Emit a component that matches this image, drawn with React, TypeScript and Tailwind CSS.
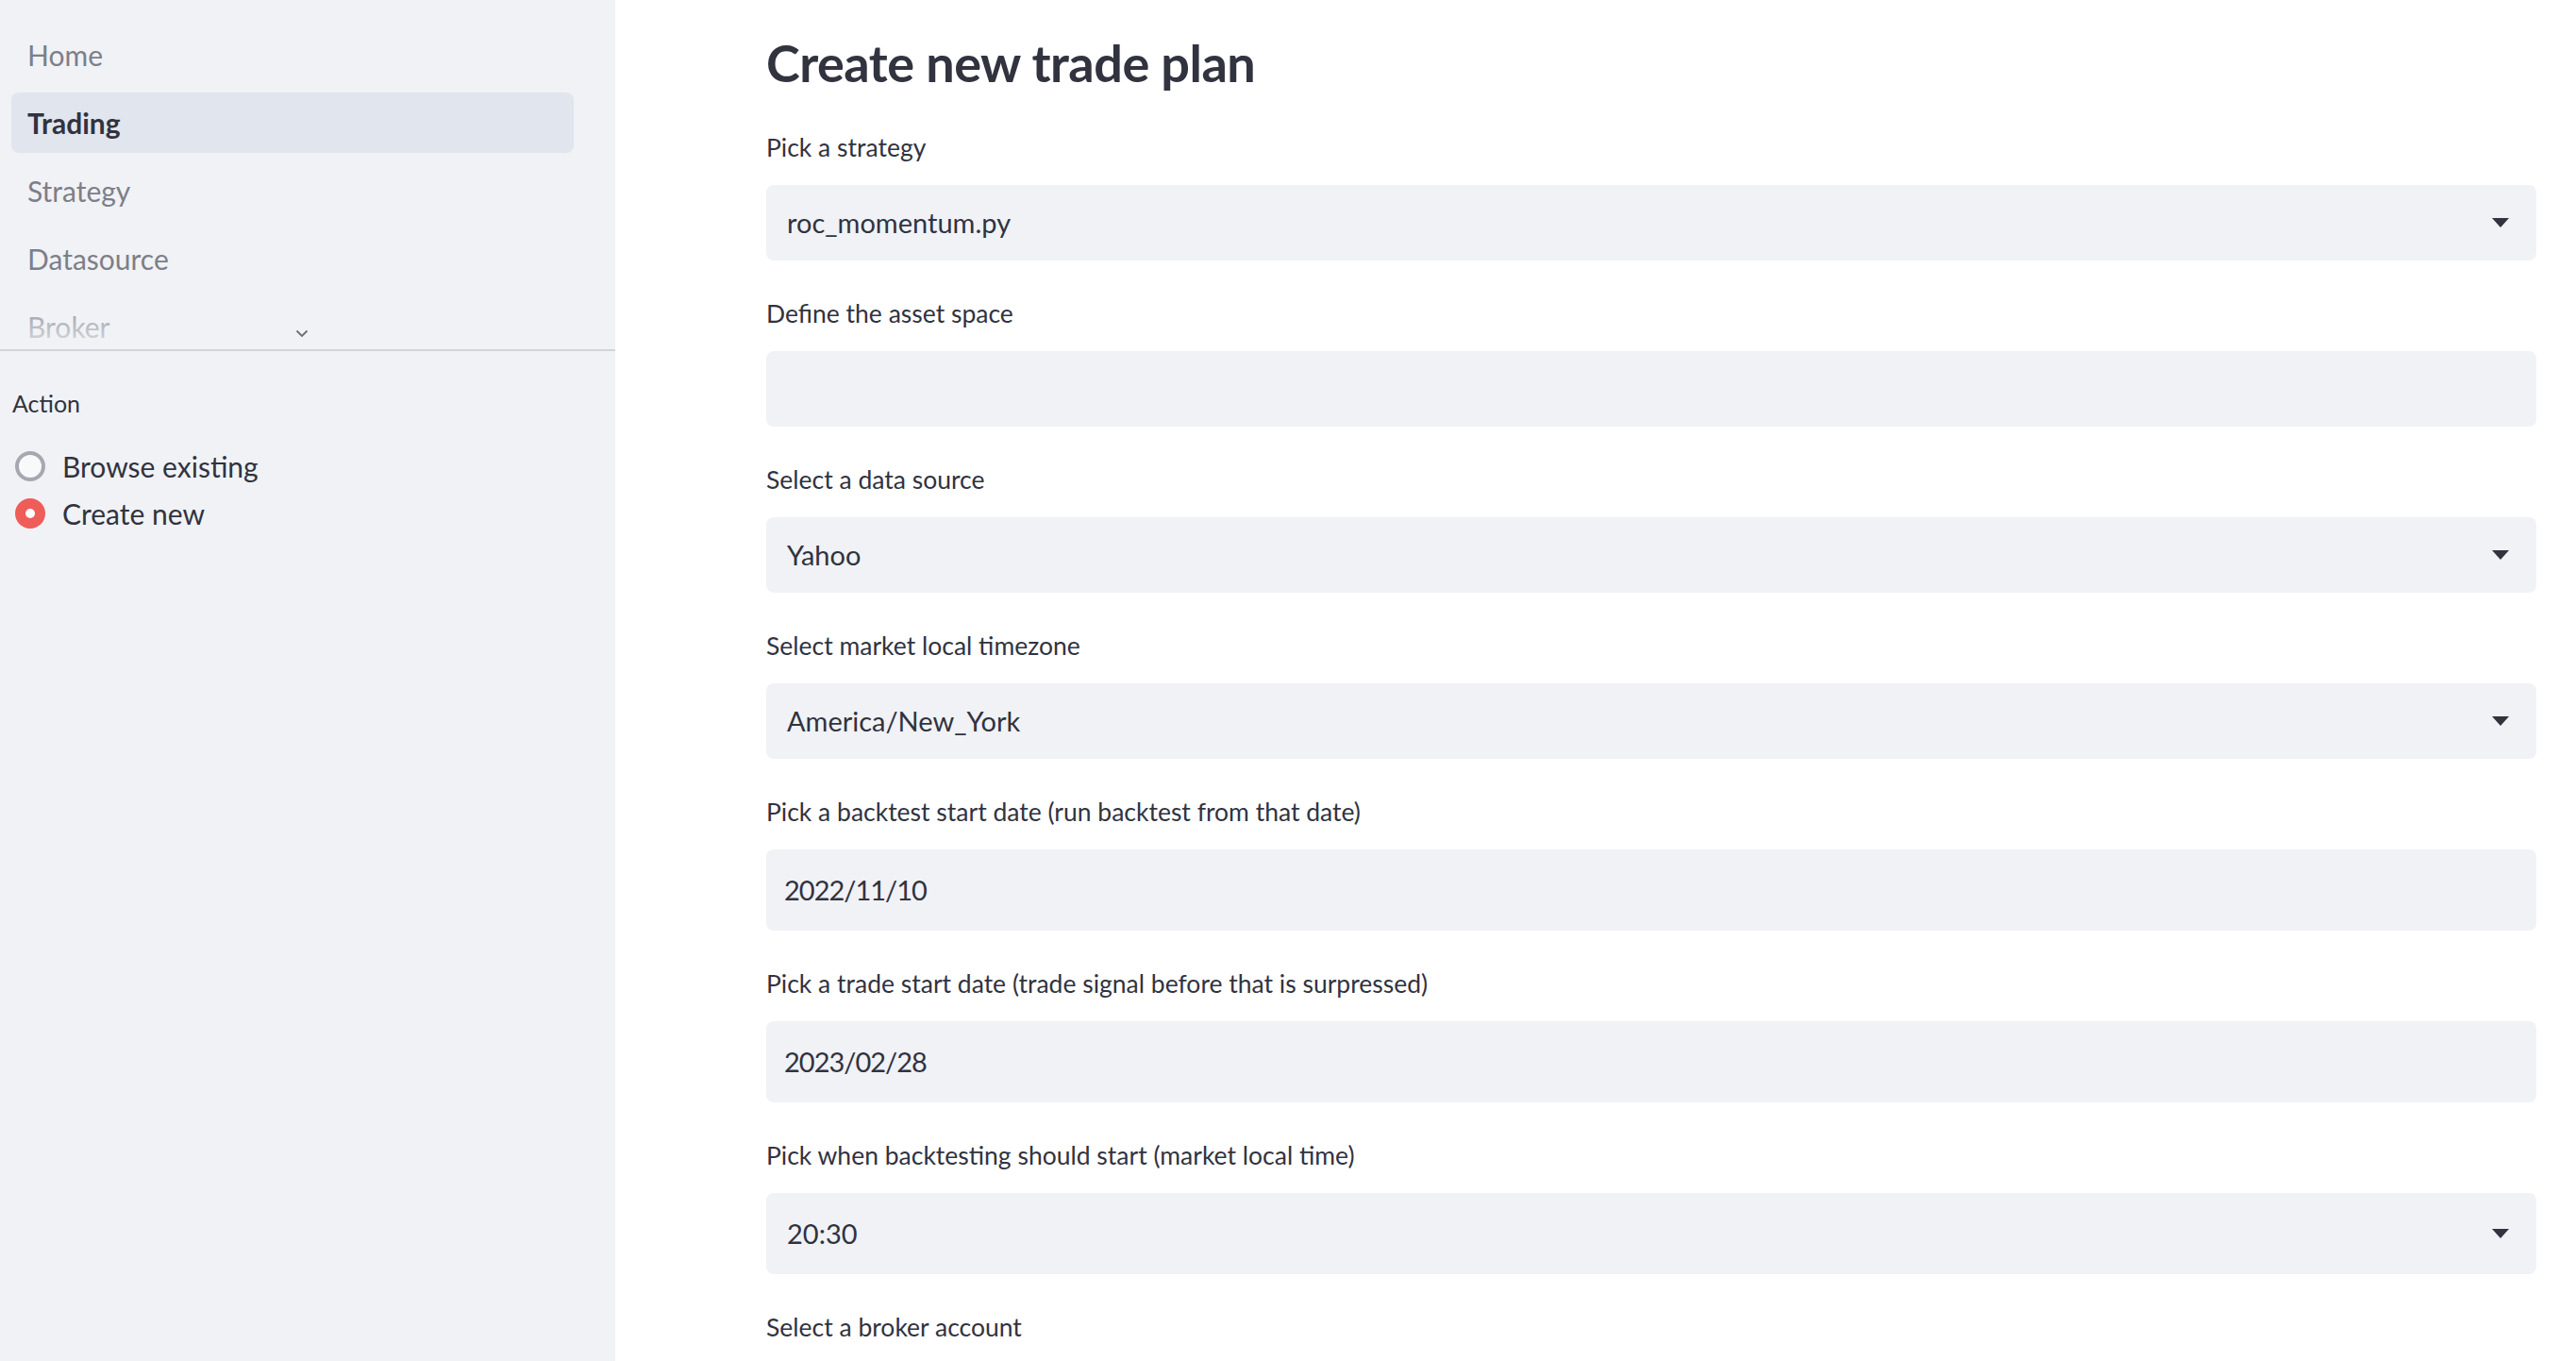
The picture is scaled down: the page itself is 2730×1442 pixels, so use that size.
import React from "react";

const NAV = ["Home", "Trading", "Strategy", "Datasource", "Broker"];

type Field = {
  label: string;
  value?: string;
  kind: "select" | "text" | "date";
};

const FIELDS: Field[] = [
  { label: "Pick a strategy", value: "roc_momentum.py", kind: "select" },
  { label: "Define the asset space", kind: "text" },
  { label: "Select a data source", value: "Yahoo", kind: "select" },
  { label: "Select market local timezone", value: "America/New_York", kind: "select" },
  { label: "Pick a backtest start date (run backtest from that date)", value: "2022/11/10", kind: "date" },
  { label: "Pick a trade start date (trade signal before that is surpressed)", value: "2023/02/28", kind: "date" },
  { label: "Pick when backtesting should start (market local time)", value: "20:30", kind: "select" },
];

function Caret() {
  return (
    <svg width="18" height="10" viewBox="0 0 18 10" className="shrink-0">
      <path d="M0 0 L18 0 L9 10 Z" fill="#31333f" />
    </svg>
  );
}

function FieldBox({ field, tall }: { field: Field; tall: boolean }) {
  if (field.kind === "select") {
    return (
      <div
        className={`flex items-center justify-between rounded-[8px] bg-[#f0f2f6] pl-[22px] pr-[29px] text-[29px] text-[#31333f] ${
          tall ? "h-[86px]" : "h-[80px]"
        }`}
      >
        <span>{field.value}</span>
        <Caret />
      </div>
    );
  }
  if (field.kind === "date") {
    return (
      <div className="flex h-[86px] items-center rounded-[8px] bg-[#f0f2f6] pl-[19px] text-[29px] tracking-[-1px] text-[#31333f]">
        {field.value}
      </div>
    );
  }
  return <div className="h-[80px] rounded-[8px] bg-[#f0f2f6]" />;
}

export default function App() {
  return (
    <div
      className="flex h-[1442px] w-full overflow-hidden bg-white text-[#31333f]"
      style={{ fontFamily: "Lato, 'Open Sans', sans-serif" }}
    >
      {/* Sidebar */}
      <aside className="flex w-[652px] shrink-0 flex-col bg-[#f0f2f6]">
        <div className="relative h-[370px] overflow-hidden">
          <nav className="flex flex-col gap-[8px] pl-[12px] pr-[44px] pt-[26px]">
            {NAV.map((item) => (
              <div
                key={item}
                className={`flex h-[64px] items-center rounded-[8px] px-[17px] text-[30px] ${
                  item === "Trading"
                    ? "bg-[#e1e5ed] font-bold text-[#31333f]"
                    : "text-[#7d7f88]"
                }`}
              >
                {item}
              </div>
            ))}
          </nav>
          <div className="absolute bottom-0 left-0 right-0 h-[64px] bg-linear-to-b from-[#f0f2f6]/0 to-[#f0f2f6]/85" />
          <svg
            width="14"
            height="9"
            viewBox="0 0 14 9"
            className="absolute left-[313px] top-[349px]"
          >
            <path d="M1.5 1.5 L7 7 L12.5 1.5" fill="none" stroke="#6b6d76" strokeWidth="1.8" />
          </svg>
        </div>
        <div className="h-[2px] bg-[#d3d5db]" />

        <div className="pl-[13px] pt-[40px]">
          <div className="h-[30px] text-[25px] leading-[30px]">Action</div>
          <div className="mt-[27px] flex flex-col">
            <label className="flex h-[50px] items-center gap-[18px] pl-[3px] text-[30px]">
              <span className="h-[32px] w-[32px] rounded-full border-[4px] border-[#a5a8b1] bg-[#f8f9fb]" />
              Browse existing
            </label>
            <label className="flex h-[50px] items-center gap-[18px] pl-[3px] text-[30px]">
              <span className="flex h-[32px] w-[32px] items-center justify-center rounded-full bg-[#ef5d59]">
                <span className="h-[10px] w-[10px] rounded-full bg-white" />
              </span>
              Create new
            </label>
          </div>
        </div>
      </aside>

      {/* Main */}
      <main className="flex min-w-0 flex-1 flex-col pl-[160px] pr-[42px] pt-[34px]">
        <h1 className="h-[65px] text-[54px] font-bold leading-[65px] tracking-[-0.5px]">
          Create new trade plan
        </h1>
        <div className="mt-[42px] flex flex-col gap-[41px]">
          {FIELDS.map((f, i) => (
            <div key={f.label} className="flex flex-col gap-[25px]">
              <div className="h-[30px] text-[26.5px] leading-[30px]">{f.label}</div>
              <FieldBox field={f} tall={i >= 4} />
            </div>
          ))}
          <div className="h-[30px] text-[26.5px] leading-[30px]">Select a broker account</div>
        </div>
      </main>
    </div>
  );
}
